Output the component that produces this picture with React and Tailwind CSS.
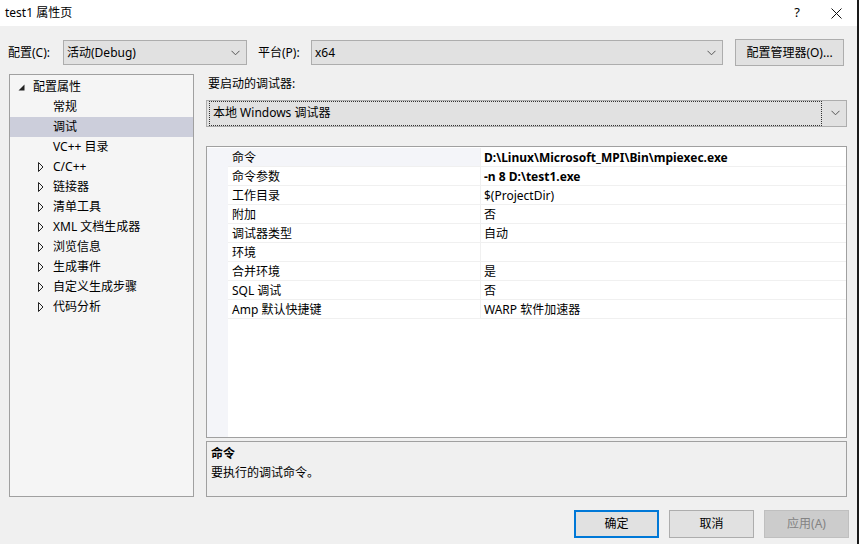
import React from "react";

const font = { fontFamily: '"Noto Sans", "Noto Sans CJK SC", sans-serif' };

function Chevron() {
  return (
    <svg width="9" height="6" viewBox="0 0 9 6" className="shrink-0">
      <path d="M0.5 0.8 L4.5 4.8 L8.5 0.8" fill="none" stroke="#555" strokeWidth="1" />
    </svg>
  );
}

function Combo({ children, className = "", focus = false }) {
  return (
    <div className={`flex items-center border border-[#adadad] bg-[#e1e1e1] ${className}`}>
      <div className={`flex-1 h-full flex items-center pl-[3px] ${focus ? "border border-dotted border-[#333] m-[2px] pl-[1px]" : ""}`}>
        {children}
      </div>
      <div className="w-[22px] flex justify-center">
        <Chevron />
      </div>
    </div>
  );
}

function Expanded() {
  return (
    <svg width="7" height="7" viewBox="0 0 7 7">
      <path d="M6.5 0.5 L6.5 6.5 L0.5 6.5 Z" fill="#222" />
    </svg>
  );
}

function Collapsed() {
  return (
    <svg width="6" height="10" viewBox="0 0 6 10">
      <path d="M0.5 0.5 L5 5 L0.5 9.5 Z" fill="none" stroke="#222" strokeWidth="1" />
    </svg>
  );
}

const tree = [
  { t: "配置属性", level: 0, icon: "exp" },
  { t: "常规", level: 1 },
  { t: "调试", level: 1, sel: true },
  { t: "VC++ 目录", level: 1 },
  { t: "C/C++", level: 1, icon: "col" },
  { t: "链接器", level: 1, icon: "col" },
  { t: "清单工具", level: 1, icon: "col" },
  { t: "XML 文档生成器", level: 1, icon: "col" },
  { t: "浏览信息", level: 1, icon: "col" },
  { t: "生成事件", level: 1, icon: "col" },
  { t: "自定义生成步骤", level: 1, icon: "col" },
  { t: "代码分析", level: 1, icon: "col" },
];

const props = [
  ["命令", "D:\\Linux\\Microsoft_MPI\\Bin\\mpiexec.exe", true],
  ["命令参数", "-n 8 D:\\test1.exe", true],
  ["工作目录", "$(ProjectDir)"],
  ["附加", "否"],
  ["调试器类型", "自动"],
  ["环境", ""],
  ["合并环境", "是"],
  ["SQL 调试", "否"],
  ["Amp 默认快捷键", "WARP 软件加速器"],
];

export default function App() {
  return (
    <div style={font} className="w-[859px] h-[544px] flex bg-[#f0f0f0] text-[12px] text-black overflow-hidden">
      <div className="flex-1 flex flex-col">
        {/* Title bar */}
        <div className="h-[26px] bg-white flex items-center pl-[5px] shrink-0">
          <span className="flex-1 text-[12px]">test1 属性页</span>
          <span className="w-[20px] text-center text-[13px] mr-[24px]">?</span>
          <svg width="11" height="11" viewBox="0 0 11 11" className="mr-[15px]">
            <path d="M0.5 0.5 L10.5 10.5 M10.5 0.5 L0.5 10.5" stroke="#111" strokeWidth="1" />
          </svg>
        </div>

        {/* Config row */}
        <div className="flex items-center h-[27px] mt-[13px] pl-[8px]">
          <span className="w-[55px]">配置(C):</span>
          <Combo className="w-[184px] h-[25px]">活动(Debug)</Combo>
          <span className="ml-[11px] w-[53px]">平台(P):</span>
          <Combo className="w-[412px] h-[25px]">x64</Combo>
          <button className="ml-[12px] w-[109px] h-[27px] border border-[#adadad] bg-[#e1e1e1] text-[12px]">
            配置管理器(O)...
          </button>
        </div>

        {/* Main */}
        <div className="flex mt-[8px] pl-[9px] h-[423px]">
          <div className="w-[185px] border border-[#a0a0a0] bg-[#f5f5f5] pt-[2px]">
            {tree.map((it) => (
              <div
                key={it.t}
                className={`h-[20px] flex items-center ${it.sel ? "bg-[#cccedb]" : ""}`}
              >
                <div className={`flex justify-center items-center ${it.level === 0 ? "w-[23px]" : "w-[43px] pl-[18px]"}`}>
                  {it.icon === "exp" && <Expanded />}
                  {it.icon === "col" && <Collapsed />}
                </div>
                <span className="whitespace-nowrap">{it.t}</span>
              </div>
            ))}
          </div>

          <div className="ml-[12px] w-[641px] flex flex-col">
            <div className="h-[17px] pl-[2px] flex items-center mt-[1px]">要启动的调试器:</div>
            <Combo focus className="h-[27px] mt-[8px]">本地 Windows 调试器</Combo>

            <div className="mt-[19px] h-[293px] border border-[#a0a0a0] bg-white flex flex-col pt-[1px]">
              {props.map(([k, v, bold], i) => (
                <div key={k} className="h-[19px] flex">
                  <div className="w-[21px] bg-[#f4f5f9]" />
                  <div className={`w-[253px] flex items-center pl-[4px] pt-[2px] border-b border-r border-[#f0f0f0] ${i === 0 ? "bg-[#f4f5f9]" : ""}`}>
                    {k}
                  </div>
                  <div className={`flex-1 flex items-center pl-[3px] pt-[2px] border-b border-[#f0f0f0] ${bold ? "font-bold" : ""}`}>
                    {v}
                  </div>
                </div>
              ))}
              <div className="flex-1 flex">
                <div className="w-[21px] bg-[#f4f5f9]" />
              </div>
            </div>

            <div className="mt-[3px] h-[56px] border border-[#a0a0a0] bg-[#f0f0f0] px-[4px] pt-[2px] leading-[19px]">
              <div className="font-bold">命令</div>
              <div>要执行的调试命令。</div>
            </div>
          </div>
        </div>

        {/* Buttons */}
        <div className="flex justify-end gap-[10px] mt-[13px] pr-[8px]">
          <button className="w-[85px] h-[28px] border-2 border-[#0078d7] bg-[#e1e1e1] text-[12px]">确定</button>
          <button className="w-[85px] h-[28px] border border-[#adadad] bg-[#e1e1e1] text-[12px]">取消</button>
          <button className="w-[85px] h-[28px] border border-[#bfbfbf] bg-[#cccccc] text-[#838383] text-[12px]">应用(A)</button>
        </div>
      </div>
      <div className="w-[2px] bg-[#1a1a1a]" />
    </div>
  );
}
